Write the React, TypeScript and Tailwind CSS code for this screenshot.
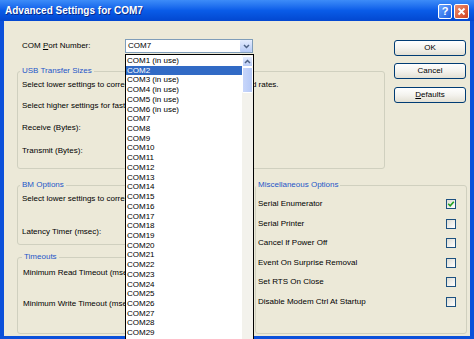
import React from "react";

const items = Array.from({ length: 29 }, (_, i) => {
  const n = i + 1;
  return n <= 6 && n !== 2 ? `COM${n} (in use)` : `COM${n}`;
});

function Group({
  title,
  className,
  titleClass,
  children,
}: {
  title: string;
  className: string;
  titleClass?: string;
  children?: React.ReactNode;
}) {
  return (
    <div className={`border border-[#D0D0BF] rounded-[3px] flex flex-col ${className}`}>
      <div className={`-mt-[6px] px-[2px] w-fit bg-[#ECE9D8] text-[#1E56C8] leading-[10px] ${titleClass ?? "ml-[2px]"}`}>
        {title}
      </div>
      {children}
    </div>
  );
}

function Button({ children, className }: { children: React.ReactNode; className?: string }) {
  return (
    <div
      className={`h-[16px] w-[72px] rounded-[3px] border border-[#003C74] bg-linear-to-b from-white via-[#F4F3EE] to-[#E3E0D4] flex items-center justify-center ${className ?? ""}`}
    >
      {children}
    </div>
  );
}

function Check({ checked }: { checked?: boolean }) {
  return (
    <div className="w-[10px] h-[10px] border border-[#1C5180] bg-linear-to-br from-[#DCDCD5] to-white flex items-center justify-center">
      {checked && (
        <svg width="8" height="8" viewBox="0 0 8 8">
          <path d="M1.2 3.8 L3.2 5.8 L6.8 1.8" fill="none" stroke="#21A121" strokeWidth="1.6" />
        </svg>
      )}
    </div>
  );
}

function Chevron({ up }: { up?: boolean }) {
  return (
    <svg width="7" height="5" viewBox="0 0 7 5">
      <path
        d={up ? "M1 4 L3.5 1.5 L6 4" : "M1 1 L3.5 3.5 L6 1"}
        fill="none"
        stroke="#4D6185"
        strokeWidth="1.5"
      />
    </svg>
  );
}

export default function App() {
  const misc = [
    ["Serial Enumerator", true],
    ["Serial Printer", false],
    ["Cancel If Power Off", false],
    ["Event On Surprise Removal", false],
    ["Set RTS On Close", false],
    ["Disable Modem Ctrl At Startup", false],
  ] as const;

  return (
    <div className="w-[474px] h-[339px] overflow-hidden relative bg-[#0B50DA] font-['Liberation_Sans',Arial,sans-serif] text-[8px] leading-[10px] text-black">
      {/* Title bar */}
      <div className="h-[21px] flex items-center justify-between pl-[5px] pr-[5px] bg-linear-to-b from-[#3D8CF8] via-[#0A5CE8] to-[#0347D0]">
        <span className="text-white font-bold text-[10px] leading-[12px] [text-shadow:1px_1px_0_#0A2A8A]">
          Advanced Settings for COM7
        </span>
        <div className="flex gap-[2px] mt-[1px]">
          <div className="w-[14px] h-[15px] rounded-[2px] border border-white bg-linear-to-br from-[#6AA5FF] to-[#1B5DE0] text-white font-bold text-[11px] leading-[13px] flex items-center justify-center">
            ?
          </div>
          <div className="w-[15px] h-[15px] rounded-[2px] border border-white bg-linear-to-br from-[#EC8E6F] to-[#CF3E1A] flex items-center justify-center">
            <svg width="9" height="9" viewBox="0 0 9 9">
              <path d="M1.5 1.5 L7.5 7.5 M7.5 1.5 L1.5 7.5" stroke="white" strokeWidth="1.8" />
            </svg>
          </div>
        </div>
      </div>

      {/* Body */}
      <div className="mx-[4px] h-[315px] bg-[#ECE9D8] flex flex-col">
        <div className="flex">
          <div className="w-[368px] ml-[13px] pt-[18px] flex flex-col">
            <div className="h-[14px] flex items-center">
              <div className="w-[108px] pl-[5px]">
                COM <span className="underline">P</span>ort Number:
              </div>
              <div className="w-[128px] h-[14px] border border-[#7F9DB9] bg-white flex items-center justify-between">
                <span className="pl-[2px]">COM7</span>
                <div className="w-[12px] h-[12px] mr-[0px] rounded-[1px] bg-linear-to-b from-[#E4ECFE] to-[#B7CBF7] flex items-center justify-center">
                  <Chevron />
                </div>
              </div>
            </div>
            <Group title="USB Transfer Sizes" className="mt-[18px] h-[98px]">
              <div className="pl-[4px] mt-[4px] whitespace-nowrap">
                Select lower settings to correct performance problems at low baud rates.
              </div>
              <div className="pl-[4px] mt-[11px] whitespace-nowrap">
                Select higher settings for faster performance.
              </div>
              <div className="pl-[4px] mt-[12px]">Receive (Bytes):</div>
              <div className="pl-[4px] mt-[13px]">Transmit (Bytes):</div>
            </Group>
          </div>
          <div className="ml-[9px] pt-[19px] flex flex-col">
            <Button>OK</Button>
            <Button className="mt-[7px]">Cancel</Button>
            <Button className="mt-[8px]">
              <span className="underline">D</span>efaults
            </Button>
          </div>
        </div>

        <div className="flex mt-[16px] ml-[13px]">
          <div className="w-[233px] flex flex-col">
            <Group title="BM Options" className="h-[60px]">
              <div className="pl-[4px] mt-[4px] whitespace-nowrap">
                Select lower settings to correct response problems.
              </div>
              <div className="pl-[4px] mt-[23px]">Latency Timer (msec):</div>
            </Group>
            <Group title="Timeouts" className="mt-[12px] h-[77px]" titleClass="ml-[4px]">
              <div className="pl-[5px] mt-[6px] whitespace-nowrap">Minimum Read Timeout (msec):</div>
              <div className="pl-[5px] mt-[21px] whitespace-nowrap">Minimum Write Timeout (msec):</div>
            </Group>
          </div>
          <Group title="Miscellaneous Options" className="ml-[5px] w-[212px] h-[149px]" titleClass="ml-[0px]">
            <div className="mt-[4.2px] flex flex-col">
              {misc.map(([label, c]) => (
                <div key={label} className="h-[19.6px] flex items-center justify-between pl-[2px] pr-[10px]">
                  <span>{label}</span>
                  <Check checked={c} />
                </div>
              ))}
            </div>
          </Group>
        </div>
      </div>

      {/* Open dropdown list */}
      <div className="absolute left-[125px] top-[54px] w-[129px] h-[300px] border border-black bg-white flex">
        <div className="flex-1 pt-[1px]">
          {items.map((t, i) => (
            <div
              key={t}
              className={`h-[9.72px] leading-[9.72px] pl-[1px] ${i === 1 ? "bg-[#316AC5] text-white" : ""}`}
            >
              {t}
            </div>
          ))}
        </div>
        <div className="w-[11px] flex flex-col bg-[#F3F2EC]">
          <div className="h-[11px] mt-[1px] rounded-[1px] bg-linear-to-b from-[#E4ECFE] to-[#B9CCF7] border border-white flex items-center justify-center">
            <Chevron up />
          </div>
          <div className="h-[26px] rounded-[1px] bg-linear-to-r from-[#C8D6FA] to-[#B5C9F7] border border-white" />
          <div className="flex-1" />
        </div>
      </div>
    </div>
  );
}
